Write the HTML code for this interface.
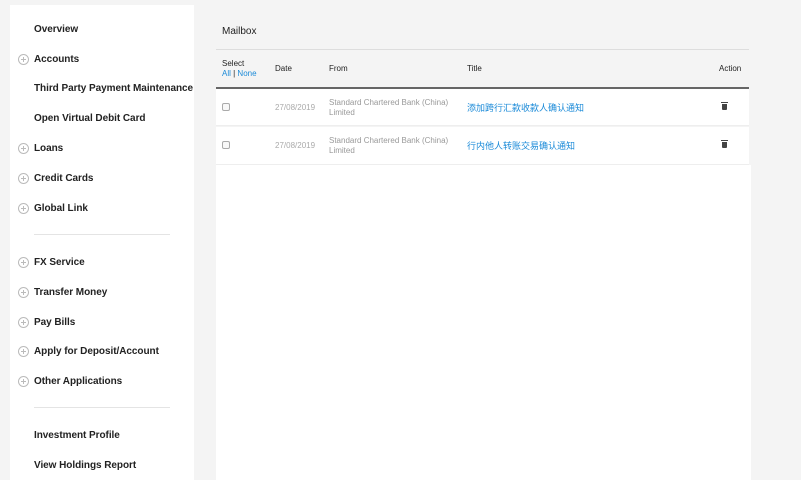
<!DOCTYPE html>
<html><head><meta charset="utf-8"><style>
*{margin:0;padding:0;box-sizing:border-box}
body{width:801px;height:480px;background:#f4f4f4;font-family:"Liberation Sans","Noto Sans CJK SC",sans-serif;position:relative;overflow:hidden;color:#222}
.side{position:absolute;left:10px;top:5px;width:184px;height:475px;background:#fff}
.it{position:absolute;left:34px;font-size:10px;font-weight:bold;color:#222;white-space:nowrap;letter-spacing:-0.05px}
.pl{position:absolute;left:18px;width:11px;height:11px;border:1px solid #bbb;border-radius:50%}
.pl:before{content:"";position:absolute;left:2px;top:4px;width:5px;height:1px;background:#bbb}
.pl:after{content:"";position:absolute;left:4px;top:2px;width:1px;height:5px;background:#bbb}
.sep{position:absolute;left:34px;width:136px;height:1px;background:#e4e4e4}
.a{position:absolute;font-size:8px;white-space:nowrap}
.cb{position:absolute;left:222px;width:8px;height:8px;border:1px solid #aaa;border-radius:2px;background:#f8f8f8}
.tr{position:absolute;left:722px;width:5px;height:6px;background:#444;border-radius:0 0 1px 1px}
.tr:before{content:"";position:absolute;left:-1px;top:-2px;width:7px;height:1px;background:#444}
</style></head><body>
<div class="side"></div>
<div class="it" style="top:24px">Overview</div>
<div class="pl" style="top:54px"></div><div class="it" style="top:54px">Accounts</div>
<div class="it" style="top:83px">Third Party Payment Maintenance</div>
<div class="it" style="top:113px">Open Virtual Debit Card</div>
<div class="pl" style="top:143px"></div><div class="it" style="top:143px">Loans</div>
<div class="pl" style="top:173px"></div><div class="it" style="top:173px">Credit Cards</div>
<div class="pl" style="top:203px"></div><div class="it" style="top:203px">Global Link</div>
<div class="sep" style="top:234px"></div>
<div class="pl" style="top:257px"></div><div class="it" style="top:257px">FX Service</div>
<div class="pl" style="top:287px"></div><div class="it" style="top:287px">Transfer Money</div>
<div class="pl" style="top:317px"></div><div class="it" style="top:317px">Pay Bills</div>
<div class="pl" style="top:346px"></div><div class="it" style="top:346px">Apply for Deposit/Account</div>
<div class="pl" style="top:376px"></div><div class="it" style="top:376px">Other Applications</div>
<div class="sep" style="top:407px"></div>
<div class="it" style="top:430px">Investment Profile</div>
<div class="it" style="top:460px">View Holdings Report</div>

<div class="a" style="left:222px;top:26px;font-size:10px;color:#222">Mailbox</div>
<div style="position:absolute;left:216px;top:49px;width:533px;height:1px;background:#ddd"></div>
<div class="a" style="left:222px;top:59px;color:#222">Select</div>
<div class="a" style="left:222px;top:69px;color:#1a8ad8">All <span style="color:#222">|</span> None</div>
<div class="a" style="left:275px;top:64px">Date</div>
<div class="a" style="left:329px;top:64px">From</div>
<div class="a" style="left:467px;top:64px">Title</div>
<div class="a" style="left:719px;top:64px">Action</div>
<div style="position:absolute;left:216px;top:87px;width:533px;height:2px;background:#666"></div>
<div style="position:absolute;left:216px;top:89px;width:533px;height:37px;background:#fff;border-bottom:1px solid #eee"></div>
<div style="position:absolute;left:216px;top:127px;width:533px;height:38px;background:#fff;border-bottom:1px solid #eee"></div>
<div style="position:absolute;left:216px;top:165px;width:535px;height:315px;background:#fff"></div>
<div class="cb" style="top:103px"></div>
<div class="a" style="left:275px;top:103px;color:#aaa">27/08/2019</div>
<div class="a" style="left:329px;top:98px;color:#999;line-height:10px">Standard Chartered Bank (China)<br>Limited</div>
<div class="a" style="left:467px;top:101px;color:#1a8ad8;font-size:9px">添加跨行汇款收款人确认通知</div>
<div class="tr" style="top:104px"></div>
<div class="cb" style="top:141px"></div>
<div class="a" style="left:275px;top:141px;color:#aaa">27/08/2019</div>
<div class="a" style="left:329px;top:136px;color:#999;line-height:10px">Standard Chartered Bank (China)<br>Limited</div>
<div class="a" style="left:467px;top:139px;color:#1a8ad8;font-size:9px">行内他人转账交易确认通知</div>
<div class="tr" style="top:142px"></div>
</body></html>
